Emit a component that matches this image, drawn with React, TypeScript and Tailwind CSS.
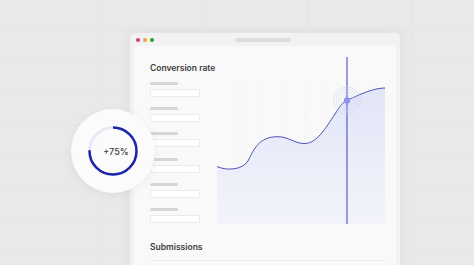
import React from "react";

const FONT = "font-['Inter','Liberation_Sans',sans-serif]";

const curve =
  "M0 109.5 C10 114 25 113 31 104 C37 92 42 80 60 79.7 C72 79.5 78 87 88 86.5 C100 86 108 72 118 57 C123 49 126 45 130 43.5 C145 36 158 31 168 31";

function Chart() {
  return (
    <svg width="168" height="167" viewBox="0 0 168 167" className="shrink-0">
      <defs>
        <linearGradient id="area" x1="0" y1="0" x2="0" y2="1">
          <stop offset="0%" stopColor="#e2e5f8" />
          <stop offset="100%" stopColor="#f3f4fa" />
        </linearGradient>
      </defs>
      <path d={`${curve} L168 167 L0 167 Z`} fill="url(#area)" />
      {[23, 45, 66, 88, 109, 152].map((x) => (
        <line key={x} x1={x} y1="30" x2={x} y2="167" stroke="#ededf2" strokeWidth="0.5" strokeDasharray="3 2" />
      ))}
      <path d={curve} fill="none" stroke="#4c52b4" strokeWidth="1" />
      <line x1="130" y1="0" x2="130" y2="167" stroke="#6169d6" strokeWidth="1.3" />
      {[6, 8.5, 11, 13.5].map((r) => (
        <circle key={r} cx="130" cy="43.5" r={r} fill="none" stroke="#d2d5f2" strokeWidth="0.6" />
      ))}
      <circle cx="130" cy="43.5" r="3.2" fill="#8d93ee" />
    </svg>
  );
}

function FormRow() {
  return (
    <div className="flex flex-col">
      <div className="h-[3px] w-[28px] rounded-full bg-[#d6d6d6]" />
      <div className="mt-[4px] h-[8px] w-[50px] rounded-[1px] border-[0.5px] border-[#ebebeb] bg-white" />
    </div>
  );
}

function Badge() {
  const r = 23.5;
  const c = 2 * Math.PI * r;
  return (
    <div className="absolute left-[71px] top-[109px] flex h-[84px] w-[84px] items-center justify-center rounded-full bg-[#fbfbfb] shadow-[0_2px_10px_rgba(0,0,0,0.06)]">
      <svg width="54" height="54" viewBox="0 0 54 54" className="absolute left-[15px] top-[15px]">
        <circle cx="27" cy="27" r={r} fill="none" stroke="#e6e7f4" strokeWidth="2.5" />
        <circle
          cx="27"
          cy="27"
          r={r}
          fill="none"
          stroke="#1b26ab"
          strokeWidth="2.5"
          strokeDasharray={`${c * 0.75} ${c}`}
          transform="rotate(-90 27 27)"
        />
      </svg>
      <span className="relative ml-[6px] text-[9px] font-medium leading-none text-[#3a3a3a]">+75%</span>
    </div>
  );
}

export default function App() {
  return (
    <div
      className={`relative h-[265px] w-[474px] overflow-hidden bg-[#e9e9e9] bg-[linear-gradient(to_right,#e5e5e5_1px,transparent_1px),linear-gradient(to_bottom,#e5e5e5_1px,transparent_1px)] bg-[length:103px_31.5px] bg-[position:102px_30px] ${FONT}`}
    >
      <div className="ml-[129px] mt-[32px] w-[272px] rounded-t-[6px] border border-[#e4e4e4] bg-[#f2f2f2] px-[4px] shadow-[0_0_12px_rgba(0,0,0,0.05)]">
        <div className="relative flex h-[13px] items-center">
          <div className="ml-[2px] flex gap-[3px]">
            <span className="h-[4px] w-[4px] rounded-full bg-[#d63a6e]" />
            <span className="h-[4px] w-[4px] rounded-full bg-[#e7a92c]" />
            <span className="h-[4px] w-[4px] rounded-full bg-[#2f9d2f]" />
          </div>
          <div className="ml-[81px] h-[4px] w-[56px] rounded-full bg-[#dedede]" />
        </div>
        <div className="h-[230px] rounded-t-[2px] bg-[#f9f9f9] pl-[16px] pr-[11px] pt-[11px]">
          <div className="flex">
            <div className="w-[67px] shrink-0 pt-[5px]">
              <div className="whitespace-nowrap text-[8.5px] font-semibold leading-[12px] text-[#3d3d3d]">Conversion rate</div>
              <div className="mt-[8px] flex flex-col gap-[10.2px]">
                <FormRow />
                <FormRow />
                <FormRow />
                <FormRow />
                <FormRow />
                <FormRow />
              </div>
            </div>
            <Chart />
          </div>
          <div className="mt-[17px] text-[8.5px] font-semibold leading-[12px] text-[#3d3d3d]">Submissions</div>
          <div className="mt-[7px] h-[1px] bg-[#ececec]" />
        </div>
      </div>
      <Badge />
    </div>
  );
}
